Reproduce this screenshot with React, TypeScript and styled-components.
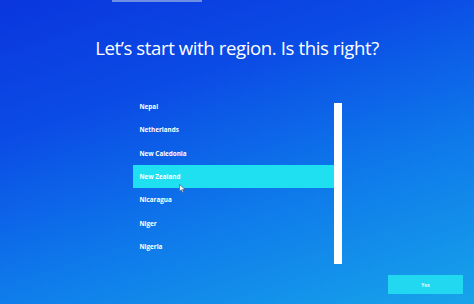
import * as React from 'react';
import styled, { createGlobalStyle } from 'styled-components';

const GlobalStyle = createGlobalStyle`
  html, body {
    margin: 0;
    padding: 0;
  }
  body {
    font-family: 'Open Sans', 'Liberation Sans', sans-serif;
  }
`;

const regions = [
  'Nepal',
  'Netherlands',
  'New Caledonia',
  'New Zealand',
  'Nicaragua',
  'Niger',
  'Nigeria',
];

const StyledPage = styled.div`
  width: 474px;
  height: 304px;
  overflow: hidden;
  display: flex;
  flex-direction: column;
  color: #ffffff;
  background: linear-gradient(162deg, #0a36de 0%, #0b4be5 30%, #0e78ea 62%, #17a4ea 100%);
`;

const StyledTopStrip = styled.div`
  height: 2px;
  display: flex;
`;

const StyledTopStrip__Glare = styled.div`
  margin-left: 112px;
  width: 90px;
  background: #6d8fe4;
`;

const StyledTitle = styled.h1`
  margin: 31px 0 0;
  font-weight: 400;
  font-size: 18.6px;
  line-height: 30px;
  text-align: center;
  letter-spacing: -0.4px;
`;

const StyledPicker = styled.div`
  display: flex;
  align-items: flex-start;
  width: 209px;
  margin: 32px auto 0;
`;

const StyledList = styled.ul`
  list-style: none;
  margin: 0;
  padding: 0;
  flex: 1;
`;

const StyledItem = styled.li<{ $selected?: boolean }>`
  position: relative;
  height: 23.33px;
  display: flex;
  align-items: center;
  padding-left: 7px;
  font-size: 6.3px;
  font-weight: 700;
  background: ${(p) => (p.$selected ? '#1fe0f1' : 'transparent')};
`;

const StyledScrollbar = styled.div`
  width: 8px;
  height: 161px;
  margin-top: 8px;
  background: #ffffff;
`;

const StyledCursor = styled.svg`
  position: absolute;
  left: 46px;
  top: 19px;
`;

const StyledFooter = styled.div`
  display: flex;
  justify-content: flex-end;
  padding: 11px 11px 0 0;
`;

const StyledButton = styled.button`
  width: 75px;
  height: 19px;
  border: none;
  padding: 0;
  background: #22d8f1;
  color: #ffffff;
  font-family: 'Open Sans', 'Liberation Sans', sans-serif;
  font-size: 5px;
  font-weight: 600;
`;

function App() {
  return (
    <StyledPage>
      <GlobalStyle />
      <StyledTopStrip>
        <StyledTopStrip__Glare />
      </StyledTopStrip>
      <StyledTitle>Let’s start with region. Is this right?</StyledTitle>
      <StyledPicker>
        <StyledList>
          {regions.map((name) => (
            <StyledItem key={name} $selected={name === 'New Zealand'}>
              {name}
              {name === 'New Zealand' && (
                <StyledCursor width="7" height="9" viewBox="0 0 7 9">
                  <path d="M0.5 0.5 L0.5 7.5 L2.3 5.8 L3.6 8.5 L4.7 8 L3.5 5.4 L6 5.4 Z" fill="#ffffff" stroke="#3a4a70" strokeWidth="0.6" />
                </StyledCursor>
              )}
            </StyledItem>
          ))}
        </StyledList>
        <StyledScrollbar />
      </StyledPicker>
      <StyledFooter>
        <StyledButton>Yes</StyledButton>
      </StyledFooter>
    </StyledPage>
  );
}

export default App;
